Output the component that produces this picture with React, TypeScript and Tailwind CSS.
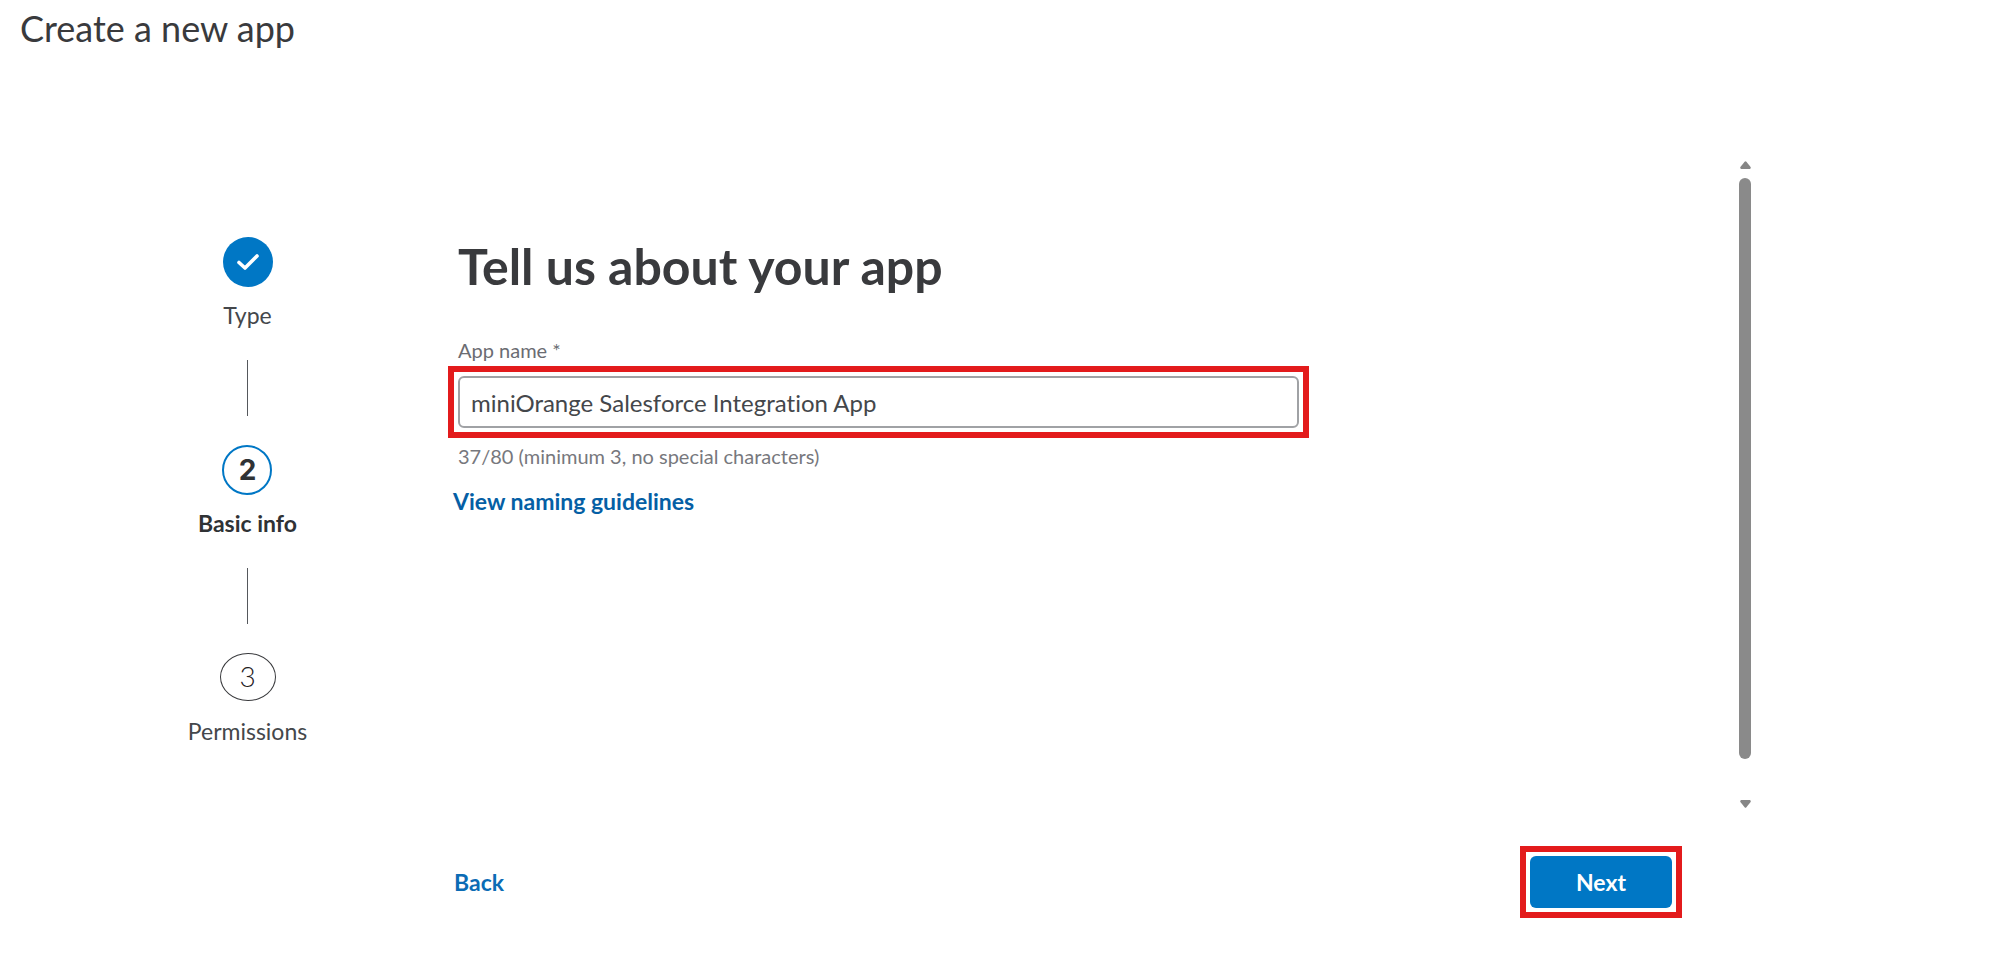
import React, { useState } from "react";

type StepStatus = "done" | "current" | "upcoming";

interface Step {
  number: number;
  label: string;
  status: StepStatus;
}

const steps: Step[] = [
  { number: 1, label: "Type", status: "done" },
  { number: 2, label: "Basic info", status: "current" },
  { number: 3, label: "Permissions", status: "upcoming" },
];

const StepMarker: React.FC<{ step: Step }> = ({ step }) => {
  if (step.status === "done") {
    return (
      <div className="flex h-[50px] w-[50px] items-center justify-center rounded-full bg-[#0077c5]">
        <svg
          width="22"
          height="16"
          viewBox="0 0 22 16"
          fill="none"
          stroke="white"
          strokeWidth="3.6"
          strokeLinecap="round"
          strokeLinejoin="round"
          aria-hidden="true"
        >
          <path d="M2 8.5 L8 14 L20 2" />
        </svg>
      </div>
    );
  }

  if (step.status === "current") {
    return (
      <div className="flex h-[50px] w-[50px] items-center justify-center rounded-full border-2 border-[#0077c5] font-['Inter',sans-serif] text-[28px] leading-none font-bold text-[#2f3235]">
        {step.number}
      </div>
    );
  }

  return (
    <div className="flex h-[48px] w-[56px] items-center justify-center rounded-[50%] border border-[#393a3d] pb-[2px] text-[28px] leading-none font-light text-[#1f2022]">
      {step.number}
    </div>
  );
};

const Stepper: React.FC = () => (
  <ol className="flex w-[175px] shrink-0 flex-col items-center pt-[76px]">
    {steps.map((step, index) => (
      <li key={step.number} className="flex flex-col items-center">
        <div className="flex h-[50px] items-start">
          <StepMarker step={step} />
        </div>
        <span
          className={
            step.status === "current"
              ? "mt-4 text-[23px] leading-6 font-bold text-[#2f3235]"
              : "mt-4 text-[23px] leading-6 text-[#44474b]"
          }
        >
          {step.label}
        </span>
        {/* Connector to the next step */}
        {index < steps.length - 1 && (
          <div className="mt-[33px] mb-[29px] h-14 w-px bg-[#55585c]" />
        )}
      </li>
    ))}
  </ol>
);

const ScrollTrack: React.FC = () => (
  <div className="flex w-3 shrink-0 flex-col items-center" aria-hidden="true">
    <svg width="11" height="8" viewBox="0 0 11 8" fill="#868686">
      <path d="M4.6 .7 Q5.5 -.3 6.4 .7 L10.6 6 Q11.2 7.5 9.8 8 H1.2 Q-.2 7.5 .4 6Z" />
    </svg>
    <div className="mt-[9px] mb-[41px] w-3 flex-1 rounded-full bg-[#8a8a8a]" />
    <svg width="11" height="8" viewBox="0 0 11 8" fill="#868686">
      <path d="M4.6 7.3 Q5.5 8.3 6.4 7.3 L10.6 2 Q11.2 .5 9.8 0 H1.2 Q-.2 .5 .4 2Z" />
    </svg>
  </div>
);

const App: React.FC = () => {
  const [appName, setAppName] = useState("miniOrange Salesforce Integration App");

  return (
    <div className="min-h-screen bg-white font-['Lato',sans-serif] text-[#393a3d] [font-variant-ligatures:none]">
      <header className="px-5 pt-[6px]">
        <h1 className="text-[36px] leading-[44px]">Create a new app</h1>
      </header>

      <main className="flex pt-[111px] pr-[249px] pl-[160px]">
        <Stepper />

        <form
          className="ml-[113px] min-w-0 flex-1"
          onSubmit={(e) => e.preventDefault()}
        >
          <div className="flex h-[647px]">
            <div className="min-w-0 flex-1 pt-[75px]">
              <h2 className="pl-[10px] text-[50px] leading-[60px] font-bold">
                Tell us about your app
              </h2>
              <label
                htmlFor="app-name"
                className="mt-[42px] block pl-[10px] text-[20px] leading-6 text-[#6b6c72]"
              >
                App name *
              </label>
              <div className="mt-1 w-2/3 border-6 border-[#e31b1c] p-1">
                <input
                  id="app-name"
                  type="text"
                  value={appName}
                  maxLength={80}
                  onChange={(e) => setAppName(e.target.value)}
                  className="block h-[52px] w-full rounded-md border-2 border-[#a0a2a5] px-[11px] text-[24px] leading-7 text-[#44474b] outline-none"
                />
              </div>
              <p className="mt-[6px] pl-[10px] text-[20px] leading-6 text-[#77787d]">
                {appName.length}/80 (minimum 3, no special characters)
              </p>
              <a
                href="#guidelines"
                className="mt-[19px] ml-[5px] inline-block text-[23px] leading-7 font-bold text-[#055fa5]"
              >
                View naming guidelines
              </a>
            </div>
            <ScrollTrack />
          </div>

          <div className="mt-[38px] flex items-center justify-between pr-[69px] pl-[6px]">
            <button
              type="button"
              className="text-[23px] leading-7 font-bold text-[#0b6cb5]"
            >
              Back
            </button>
            <div className="border-6 border-[#e31b1c] p-1">
              <button
                type="submit"
                className="block h-[52px] w-[142px] rounded-md bg-[#0077c5] text-[23px] leading-7 font-bold text-white"
              >
                Next
              </button>
            </div>
          </div>
        </form>
      </main>
    </div>
  );
};

export default App;
